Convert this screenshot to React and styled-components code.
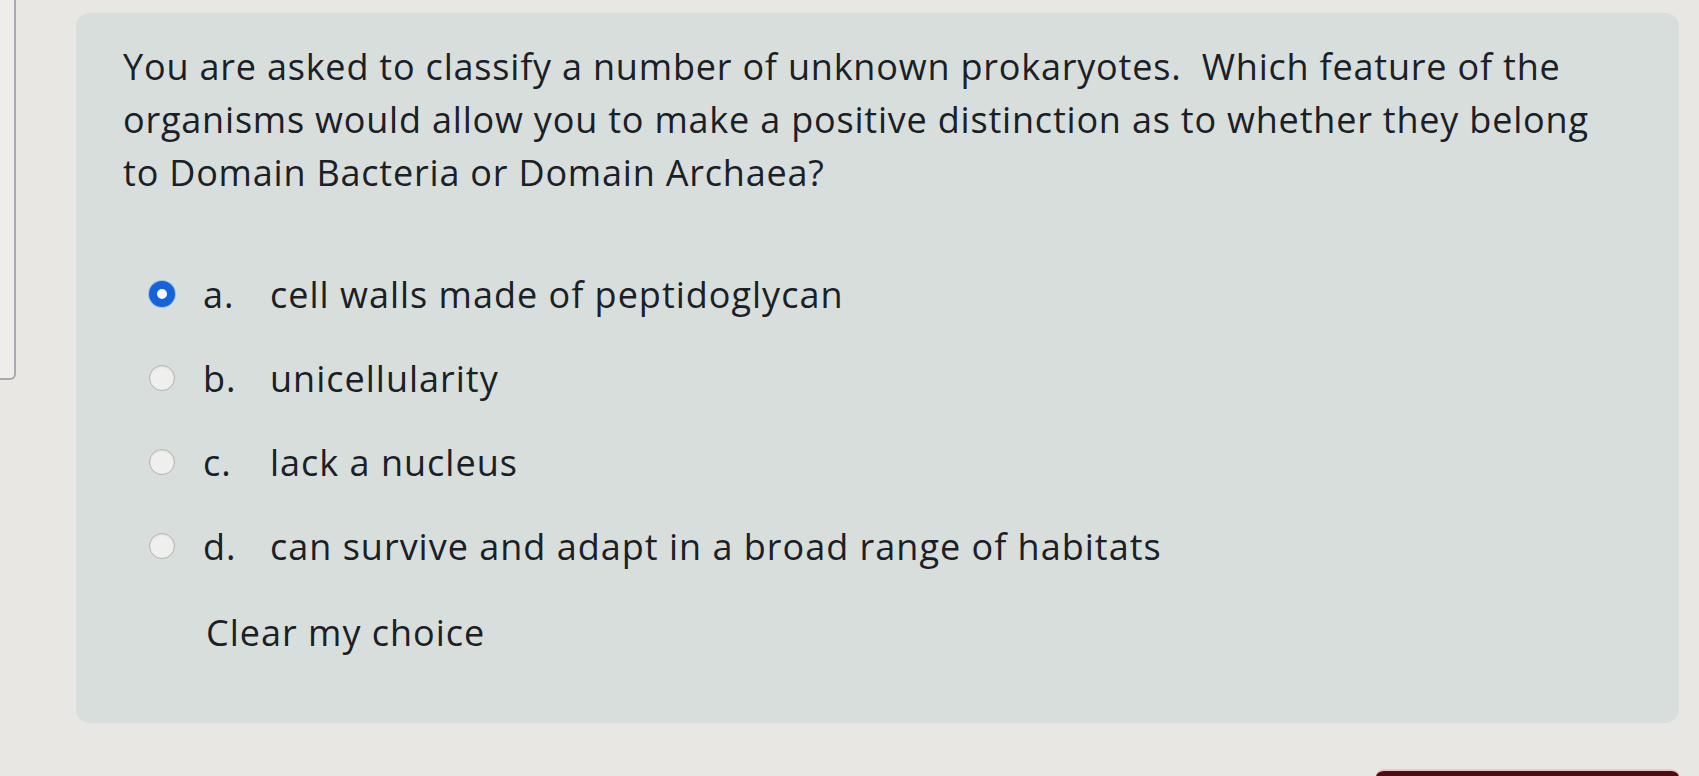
import styled, { createGlobalStyle } from "styled-components";

const GlobalStyle = createGlobalStyle`
  html, body {
    margin: 0;
    padding: 0;
    background: #e8e7e3;
  }
  body {
    font-family: "Open Sans", "Liberation Sans", sans-serif;
    color: #1b2027;
  }
`;

const Page = styled.div`
  display: flex;
  height: 776px;
  overflow: hidden;
`;

const SidePanel = styled.div`
  flex: 0 0 14px;
  height: 378px;
  border-right: 2px solid #a9a9b0;
  border-bottom: 2px solid #a9a9b0;
  border-bottom-right-radius: 6px;
  background: #eeede9;
`;

const Main = styled.div`
  flex: 1;
  display: flex;
  flex-direction: column;
  padding: 13px 20px 0 60px;
`;

const Card = styled.div`
  flex: 0 0 710px;
  box-sizing: border-box;
  background: #d7dedb;
  border-radius: 14px;
  padding: 27px 40px 0 47px;
`;

const Question = styled.p`
  margin: 0;
  font-size: 36px;
  line-height: 53px;
  letter-spacing: 0.8px;
  white-space: nowrap;
`;

const Options = styled.div`
  margin-top: 53px;
  display: flex;
  flex-direction: column;
`;

const OptionRow = styled.label`
  display: flex;
  align-items: center;
  height: 84px;
  padding-left: 26px;
  font-size: 36px;
  letter-spacing: 1px;
`;

const Radio = styled.span`
  box-sizing: border-box;
  width: 26px;
  height: 26px;
  border-radius: 50%;
  margin-right: 28px;
  flex: 0 0 26px;
  background: ${(p) => (p.checked ? "#ffffff" : "#efefee")};
  border: ${(p) => (p.checked ? "8px solid #1463d8" : "1.5px solid #b2b2b2")};
  box-shadow: ${(p) =>
    p.checked ? "0 0 0 1px rgba(20,99,216,0.25)" : "inset 0 1px 2px rgba(0,0,0,0.08)"};
`;

const Letter = styled.span`
  flex: 0 0 67px;
`;

const Clear = styled.div`
  margin-top: 18px;
  padding-left: 83px;
  font-size: 36px;
  line-height: 53px;
  letter-spacing: 1px;
`;

const BottomBar = styled.div`
  display: flex;
  justify-content: flex-end;
  margin-top: 46px;
`;

const DarkButton = styled.div`
  width: 303px;
  height: 20px;
  flex-shrink: 0;
  background: #4d0d12;
  border-top: 2px solid #e9c9c6;
  border-radius: 8px 8px 0 0;
`;

const options = [
  { key: "a.", text: "cell walls made of peptidoglycan", checked: true },
  { key: "b.", text: "unicellularity" },
  { key: "c.", text: "lack a nucleus" },
  { key: "d.", text: "can survive and adapt in a broad range of habitats" },
];

export default function App() {
  return (
    <>
      <GlobalStyle />
      <Page>
        <SidePanel />
        <Main>
          <Card>
            <Question>
              You are asked to classify a number of unknown prokaryotes.&nbsp; Which feature of the
              <br />
              organisms would allow you to make a positive distinction as to whether they belong
              <br />
              to Domain Bacteria or Domain Archaea?
            </Question>
            <Options>
              {options.map((o) => (
                <OptionRow key={o.key}>
                  <Radio checked={o.checked} />
                  <Letter>{o.key}</Letter>
                  <span>{o.text}</span>
                </OptionRow>
              ))}
            </Options>
            <Clear>Clear my choice</Clear>
          </Card>
          <BottomBar>
            <DarkButton />
          </BottomBar>
        </Main>
      </Page>
    </>
  );
}
